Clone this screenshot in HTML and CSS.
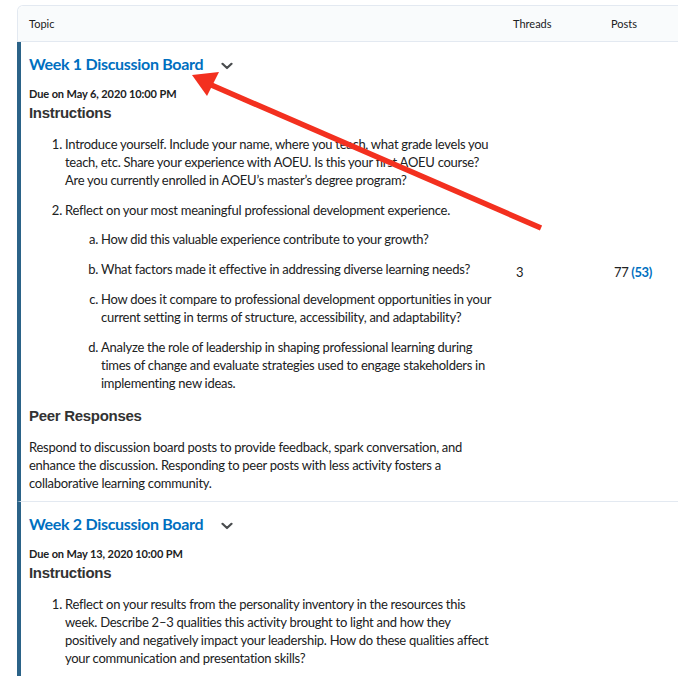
FILE: index.html
```html
<!DOCTYPE html>
<html lang="en">
<head>
  <meta charset="UTF-8" />
  <title>Discussions</title>
  <link rel="stylesheet" href="styles.css">
</head>
<body>
  <div class="topics">
    <div class="head">
      <div class="col-topic">Topic</div>
      <div class="col-num">Threads</div>
      <div class="col-num">Posts</div>
    </div>

    <div class="row">
      <div class="col-topic">
        <div class="title">
          <a href="#">Week 1 Discussion Board</a>
          <svg class="chev" width="12" height="8" viewBox="0 0 12 8"><path d="M1.5 1.8 L6 6 L10.5 1.8" fill="none" stroke="#494c4e" stroke-width="2.2" stroke-linecap="round" stroke-linejoin="round"/></svg>
        </div>
        <div class="due">Due on May 6, 2020 10:00 PM</div>
        <h2>Instructions</h2>
        <ol>
          <li>Introduce yourself. Include your name, where you teach, what grade levels you teach, etc. Share your experience with AOEU. Is this your first AOEU course? Are you currently enrolled in AOEU’s master’s degree program?</li>
          <li>Reflect on your most meaningful professional development experience.
            <ol class="alpha">
              <li>How did this valuable experience contribute to your growth?</li>
              <li>What factors made it effective in addressing diverse learning needs?</li>
              <li>How does it compare to professional development opportunities in your current setting in terms of structure, accessibility, and adaptability?</li>
              <li>Analyze the role of leadership in shaping professional learning during times of change and evaluate strategies used to engage stakeholders in implementing new ideas.</li>
            </ol>
          </li>
        </ol>
        <h2 class="peer">Peer Responses</h2>
        <p>Respond to discussion board posts to provide feedback, spark conversation, and enhance the discussion. Responding to peer posts with less activity fosters a collaborative learning community.</p>
      </div>
      <div class="col-num">3</div>
      <div class="col-num">77 <span class="unread">(53)</span></div>
    </div>

    <div class="row">
      <div class="col-topic">
        <div class="title">
          <a href="#">Week 2 Discussion Board</a>
          <svg class="chev" width="12" height="8" viewBox="0 0 12 8"><path d="M1.5 1.8 L6 6 L10.5 1.8" fill="none" stroke="#494c4e" stroke-width="2.2" stroke-linecap="round" stroke-linejoin="round"/></svg>
        </div>
        <div class="due">Due on May 13, 2020 10:00 PM</div>
        <h2>Instructions</h2>
        <ol>
          <li>Reflect on your results from the personality inventory in the resources this week. Describe 2–3 qualities this activity brought to light and how they positively and negatively impact your leadership. How do these qualities affect your communication and presentation skills?</li>
        </ol>
      </div>
      <div class="col-num"></div>
      <div class="col-num"></div>
    </div>
  </div>

  <!-- red callout arrow pointing at the first topic -->
  <svg class="callout" width="678" height="676" viewBox="0 0 678 676">
    <line x1="541" y1="228" x2="209" y2="84" stroke="#f3301f" stroke-width="5.5"/>
    <polygon points="192,75 219,72 207,96" fill="#f3301f"/>
  </svg>
</body>
</html>
```

FILE: styles.css
```css
body { margin: 0; overflow: hidden; font-family: Lato, "Open Sans", sans-serif; color: #202122; background: #fff; }

.topics {
  margin: 5px 0 0 17px; width: 700px;
  border: 1px solid #e3e9f1; border-bottom: none;
  border-radius: 6px 6px 0 0;
}

.head, .row { display: grid; grid-template-columns: 483px 98px 1fr; }
.head { height: 35px; align-items: center; background: #f9fbfc; border-bottom: 1px solid #e3e9f1; border-radius: 6px 6px 0 0; font-size: 11px; color: #202122; }
.head .col-topic { padding-left: 11px; }
.col-num { padding-left: 12px; }

.row { border-left: 4px solid #2b6388; margin-left: -1px; align-items: center; border-bottom: 1px solid #e3e9f1; font-size: 13px; letter-spacing: -0.27px; }
.row .col-topic { padding: 10px 0 9px 8px; align-self: start; }
.row .col-num { letter-spacing: -0.4px; }

.title { height: 24px; display: flex; align-items: center; }
.title a { color: #006fbf; text-decoration: none; font-size: 16px; font-weight: 700; letter-spacing: -0.3px; line-height: 24px; }
.chev { margin: 4px 0 0 18px; }

.due { margin-top: 10px; font-size: 11px; font-weight: 700; letter-spacing: -0.1px; line-height: 16px; }

h2 { margin: 0; font-family: "Liberation Sans", Arial, sans-serif; font-size: 15px; font-weight: 700; letter-spacing: -0.3px; line-height: 22px; color: #333; }
h2.peer { margin-top: 13px; }

ol { margin: 11px 0 0; padding-left: 36px; max-width: 430px; }
ol li { line-height: 18px; }
ol li + li { margin-top: 12px; }
ol.alpha { list-style-type: lower-alpha; margin-top: 11px; max-width: none; }

p { margin: 11px 0 0; line-height: 18px; max-width: 466px; }

.unread { color: #006fbf; font-weight: 700; }

.callout { position: absolute; left: 0; top: 0; pointer-events: none; }
```
